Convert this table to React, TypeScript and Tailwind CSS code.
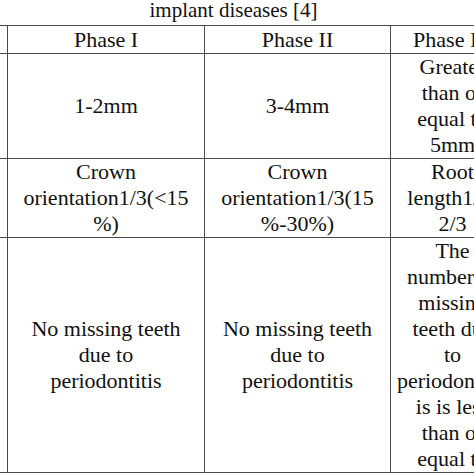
const serif = "[font-family:'Liberation_Serif','Times_New_Roman',serif]";

type Row = {
  cells: string[][];
  header?: boolean;
};

const rows: Row[] = [
  { header: true, cells: [["Phase I"], ["Phase II"], ["Phase III"]] },
  {
    cells: [
      ["1-2mm"],
      ["3-4mm"],
      ["Greater", "than or", "equal to", "5mm"],
    ],
  },
  {
    cells: [
      ["Crown", "orientation1/3(<15", "%)"],
      ["Crown", "orientation1/3(15", "%-30%)"],
      ["Root", "length1/3-", "2/3"],
    ],
  },
  {
    cells: [
      ["No missing teeth", "due to", "periodontitis"],
      ["No missing teeth", "due to", "periodontitis"],
      [
        "The",
        "number of",
        "missing",
        "teeth due",
        "to",
        "periodontitis",
        "is is less",
        "than or",
        "equal to",
      ],
    ],
  },
];

function Cell({ lines, header }: { lines: string[]; header?: boolean }) {
  return (
    <div
      className={`flex flex-col items-center justify-center overflow-hidden border-b border-r border-[#4a4a4a] text-center whitespace-nowrap ${
        header ? "border-t leading-[27px]" : "leading-[26px]"
      }`}
    >
      {lines.map((l, i) => (
        <span key={i}>{l}</span>
      ))}
    </div>
  );
}

export default function App() {
  return (
    <div className={`h-[474px] w-[474px] overflow-hidden bg-white text-[#111] ${serif}`}>
      <div className="flex h-[25px] justify-center pr-[7px] text-[21px] leading-[20px]">
        implant diseases [4]
      </div>
      <div className="grid w-[515px] grid-cols-[8px_197px_186px_124px] text-[22px]">
        {rows.map((row, r) => (
          <div key={r} className="contents">
            <div
              className={`border-b border-r border-[#4a4a4a] ${row.header ? "border-t" : ""}`}
            />
            {row.cells.map((c, i) => (
              <Cell key={i} lines={c} header={row.header} />
            ))}
          </div>
        ))}
      </div>
    </div>
  );
}
